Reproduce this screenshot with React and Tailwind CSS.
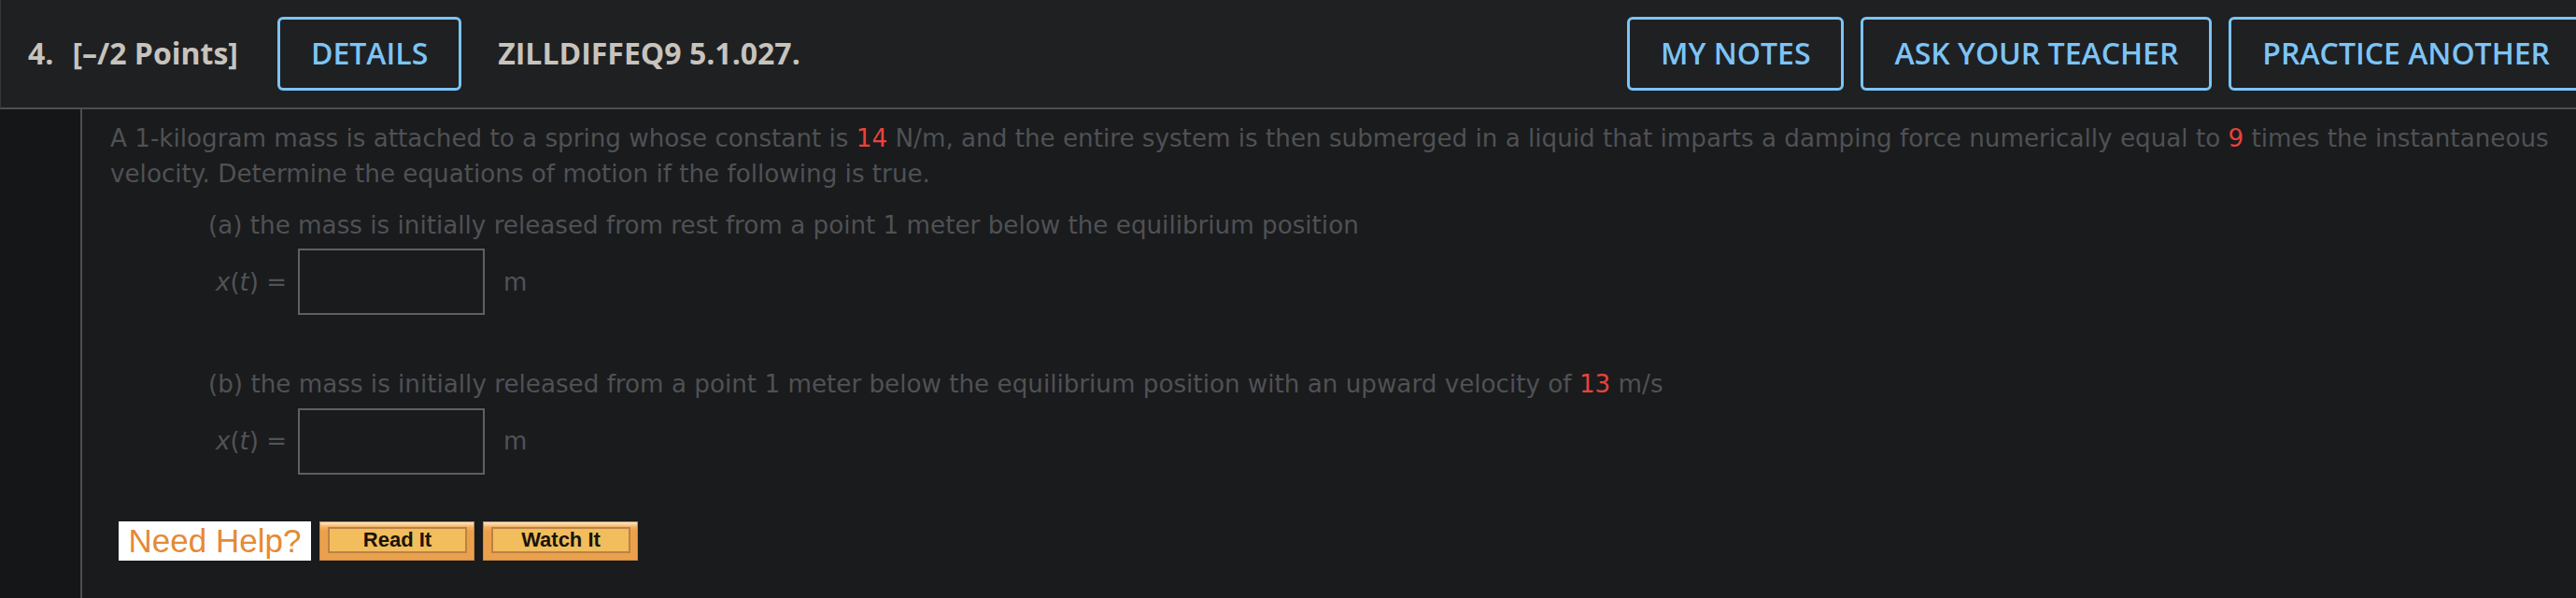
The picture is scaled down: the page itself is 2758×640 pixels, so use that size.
import React from 'react'

function OutlineButton({ children }) {
  return (
    <button className="h-[79px] shrink-0 rounded-[6px] border-[3px] border-[#7cc4f7] px-[33px] text-[32px] font-semibold uppercase text-[#7cc4f7] [font-family:'Open_Sans',sans-serif]">
      {children}
    </button>
  )
}

function HelpButton({ label }) {
  return (
    <div className="h-[42px] w-[166px] border border-[#c48a4a] bg-[linear-gradient(to_bottom,#fde8cc_0px,#f2b262_5px,#eba14c_9px,#eba14c_100%)] pb-[7px] pl-[8px] pr-[7px] pt-[5px]">
      <div className="flex h-full items-center justify-center border-2 border-[#bd8144] bg-[#f2bd5c] text-[22px] font-bold leading-none text-[#1a1408] [font-family:'Liberation_Sans',Arial,sans-serif]">
        {label}
      </div>
    </div>
  )
}

function AnswerRow() {
  return (
    <div className="mt-[6px] flex items-center">
      <span className="mr-[12px] w-[189px] text-right text-[26px] text-[#505356]">
        <i>x</i>(<i>t</i>) =
      </span>
      <div className="h-[71px] w-[200px] border-2 border-[#5b6166] bg-[#1a1b1d]" />
      <span className="ml-[20px] text-[26px] text-[#505356]">m</span>
    </div>
  )
}

export default function App() {
  const red = 'text-[#e8433b]'
  return (
    <div className="flex h-[640px] w-full flex-col overflow-hidden bg-[#1a1b1d]">
      {/* question header */}
      <div className="flex h-[117px] shrink-0 items-center border-b-2 border-l border-b-[#4a4f52] border-l-[#34373a] bg-[#1f2022] pb-[1px] [font-family:'Open_Sans',sans-serif]">
        <div className="ml-[29px] flex items-center gap-[20px] text-[32px] font-bold text-[#c7c3bd]">
          <span>4.</span>
          <span>[–/2 Points]</span>
        </div>
        <div className="ml-[42px]">
          <OutlineButton>Details</OutlineButton>
        </div>
        <span className="ml-[39px] text-[32px] font-bold text-[#c7c3bd]">ZILLDIFFEQ9 5.1.027.</span>
        <div className="-mr-[8px] ml-auto flex gap-[18px]">
          <OutlineButton>My Notes</OutlineButton>
          <OutlineButton>Ask Your Teacher</OutlineButton>
          <OutlineButton>Practice Another</OutlineButton>
        </div>
      </div>

      {/* body */}
      <div className="flex flex-1">
        <div className="w-[88px] shrink-0 border-r-2 border-[#4a4f52] bg-[#151618]" />
        <div className="flex-1 pl-[30px] pr-[6px] pt-[12px] text-[26.2px] leading-[38.4px] text-[#4f5154] [font-family:'DejaVu_Sans',Verdana,sans-serif]">
          <p>
            A 1-kilogram mass is attached to a spring whose constant is <span className={red}>14</span> N/m, and the entire
            system is then submerged in a liquid that imparts a damping force numerically equal to{' '}
            <span className={red}>9</span> times the instantaneous velocity. Determine the equations of motion if the
            following is true.
          </p>

          <p className="mt-[16px] pl-[105px]">
            (a) the mass is initially released from rest from a point 1 meter below the equilibrium position
          </p>
          <AnswerRow />

          <p className="mt-[55px] pl-[105px]">
            (b) the mass is initially released from a point 1 meter below the equilibrium position with an upward velocity
            of <span className={red}>13</span> m/s
          </p>
          <AnswerRow />

          <div className="mt-[50px] flex gap-[9px] pl-[9px]">
            <div className="flex h-[42px] w-[206px] items-center justify-center bg-white text-[35px] leading-none text-[#e58a35] [font-family:'Liberation_Sans',Arial,sans-serif]">
              Need Help?
            </div>
            <HelpButton label="Read It" />
            <HelpButton label="Watch It" />
          </div>
        </div>
      </div>
    </div>
  )
}
